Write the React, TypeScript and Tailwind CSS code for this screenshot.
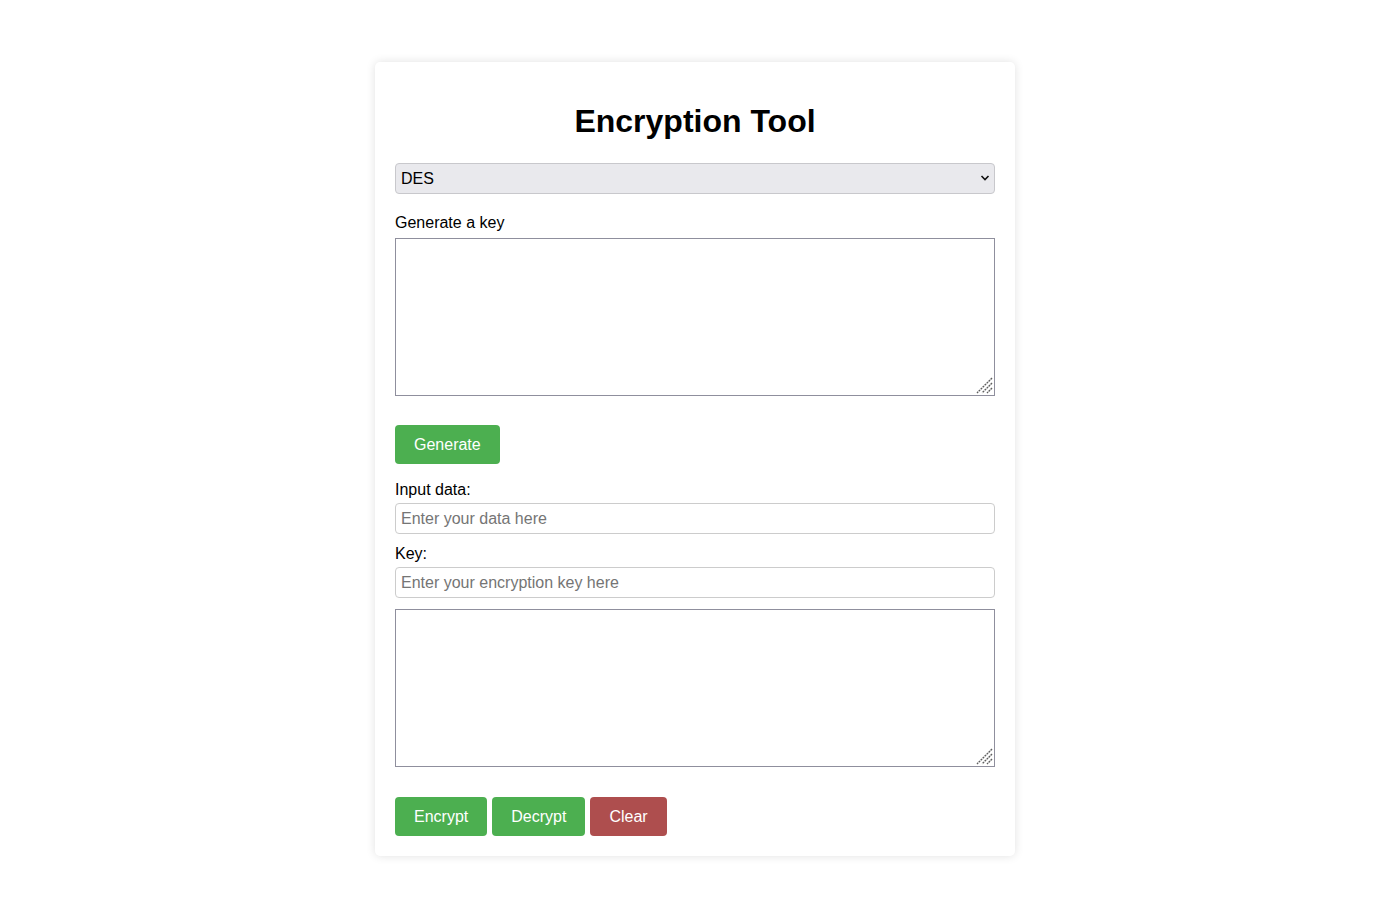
import React from "react";

function Grip() {
  return (
    <svg
      className="pointer-events-none absolute bottom-[2px] right-[2px]"
      width="18"
      height="18"
      viewBox="0 0 18 18"
    >
      <path
        d="M17 2L2 17M17 7L7 17M17 12L12 17"
        stroke="#5f5f5f"
        strokeWidth="1.4"
        strokeDasharray="2 0.8"
      />
    </svg>
  );
}

export default function App() {
  return (
    <div className="min-h-[907px] w-full bg-white font-['Liberation_Sans',Arial,sans-serif] text-black">
      <div className="flex justify-center pl-[10px] pt-[62px]">
        <div className="w-[640px] rounded-[5px] bg-white p-5 shadow-[0_0_10px_rgba(0,0,0,0.12)]">
          <h1 className="mt-[21px] mb-[23px] text-center text-[32px] font-bold leading-[37px]">
            Encryption Tool
          </h1>
          <div className="relative">
            <select
              defaultValue="DES"
              className="block h-[31px] w-full appearance-none rounded-[4px] border border-[#c8c8cc] bg-[#e9e9ed] px-[5px] text-[16px] leading-[20px] text-black outline-none"
            >
              <option>DES</option>
              <option>AES</option>
              <option>RSA</option>
            </select>
            <svg
              className="pointer-events-none absolute right-[5px] top-[11px]"
              width="10"
              height="8"
              viewBox="0 0 10 8"
              fill="none"
            >
              <path d="M1.5 2l3.5 3.5L8.5 2" stroke="#111" strokeWidth="1.6" />
            </svg>
          </div>
          <label className="mt-[19px] block text-[16px] leading-[19px]">Generate a key</label>
          <div className="relative mt-[6px]">
            <textarea className="block h-[158px] w-full resize-none border border-[#8f8f9d] bg-white p-[2px] text-[16px] outline-none" />
            <Grip />
          </div>
          <button className="mt-[29px] block h-[39px] rounded-[4px] bg-[#4caf50] px-[19px] text-[16px] text-white">
            Generate
          </button>
          <label className="mt-[16px] block text-[16px] leading-[19px]">Input data:</label>
          <input
            placeholder="Enter your data here"
            className="mt-[4px] block h-[31px] w-full rounded-[4px] border border-[#cccccc] px-[5px] text-[16px] outline-none placeholder:text-[#757575]"
          />
          <label className="mt-[10px] block text-[16px] leading-[19px]">Key:</label>
          <input
            placeholder="Enter your encryption key here"
            className="mt-[4px] block h-[31px] w-full rounded-[4px] border border-[#cccccc] px-[5px] text-[16px] outline-none placeholder:text-[#757575]"
          />
          <div className="relative mt-[11px]">
            <textarea className="block h-[158px] w-full resize-none border border-[#8f8f9d] bg-white p-[2px] text-[16px] outline-none" />
            <Grip />
          </div>
          <div className="mt-[30px] flex gap-[5px]">
            <button className="h-[39px] rounded-[4px] bg-[#4caf50] px-[19px] text-[16px] text-white">
              Encrypt
            </button>
            <button className="h-[39px] rounded-[4px] bg-[#4caf50] px-[19px] text-[16px] text-white">
              Decrypt
            </button>
            <button className="h-[39px] rounded-[4px] bg-[#ae4e4e] px-[19px] text-[16px] text-white">
              Clear
            </button>
          </div>
        </div>
      </div>
    </div>
  );
}
